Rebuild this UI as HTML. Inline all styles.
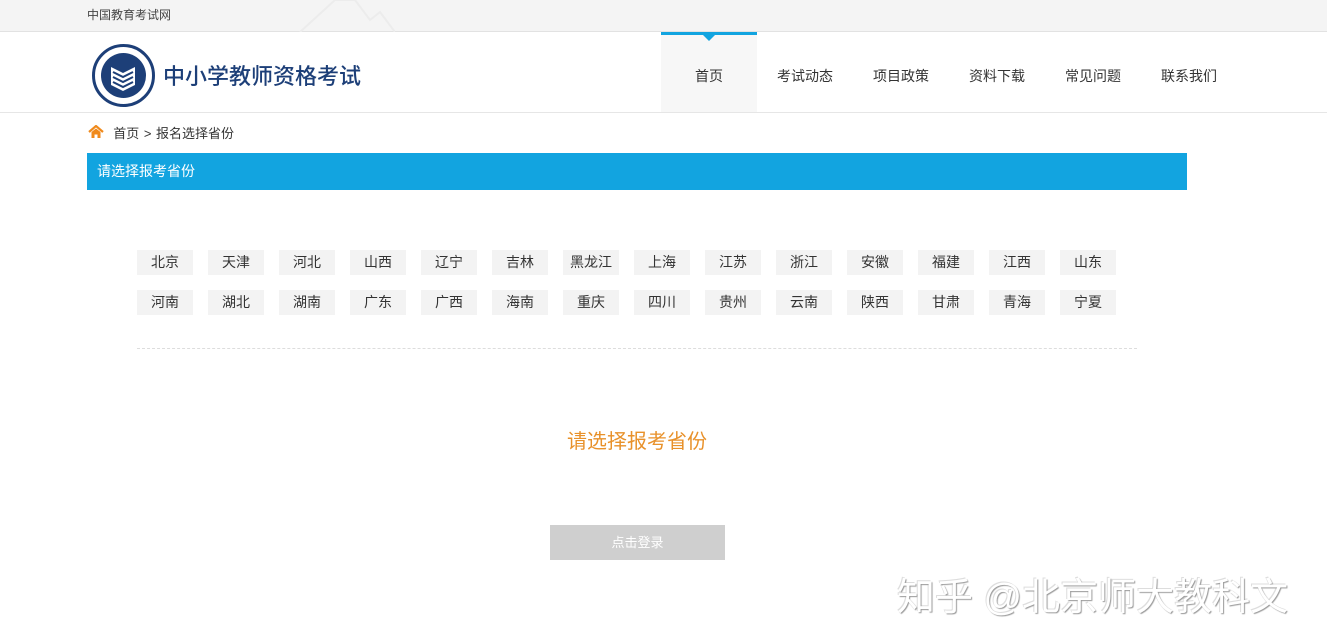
<!DOCTYPE html>
<html><head><meta charset="utf-8">
<style>
*{margin:0;padding:0;box-sizing:border-box}
body{width:1327px;height:643px;background:#fff;font-family:"Liberation Sans","Noto Sans CJK SC",sans-serif;position:relative;overflow:hidden;color:#333}
.top{position:absolute;left:0;top:0;width:1327px;height:32px;background:#f4f4f4;border-bottom:1px solid #e2e2e2}
.top span{position:absolute;left:87px;top:6px;font-size:12px;color:#444}
.hdr{position:absolute;left:0;top:32px;width:1327px;height:81px;border-bottom:1px solid #e6e6e6}
.logo{position:absolute;left:92px;top:12px;width:63px;height:63px;border-radius:50%;border:3px solid #1d3f78;background:#fff}
.logo .in{position:absolute;left:6px;top:6px;width:45px;height:45px;border-radius:50%;background:#1d3f78}
.title{position:absolute;left:163px;top:27px;font-size:22px;font-weight:500;color:#1d3f78}
.nav{position:absolute;left:661px;top:0;height:80px}
.nav div{position:absolute;top:0;width:96px;height:80px;text-align:center;line-height:88px;font-size:14px;color:#333}
.nav .act{background:#f7f7f7;border-top:3px solid #12a4e0;line-height:82px}
.nav .act:before{content:"";position:absolute;left:42px;top:0;border:6px solid transparent;border-top-color:#12a4e0}
.bc{position:absolute;left:88px;top:123px;font-size:13px;color:#333;word-spacing:1px}
.bar{position:absolute;left:87px;top:153px;width:1100px;height:37px;background:#12a4e0;color:#fff;font-size:14px;line-height:37px;padding-left:10px}
.p{position:absolute;width:56px;height:25px;background:#f3f3f3;font-size:14px;line-height:25px;text-align:center;color:#333}
.dash{position:absolute;left:137px;top:348px;width:1000px;border-top:1px dashed #ddd}
.msg{position:absolute;left:0;width:1274px;top:425px;text-align:center;font-size:20px;color:#e8912a}
.btn{position:absolute;left:550px;top:525px;width:175px;height:35px;background:#cfcfcf;color:#fff;font-size:13px;line-height:35px;text-align:center}
.wm{position:absolute;left:897px;top:566px;font-size:38px;color:#fff;text-shadow:1px 1px 1px #999,-1px -1px 0 #ddd}
</style></head><body>
<div class="top"><span>中国教育考试网</span>
<svg style="position:absolute;left:295px;top:0" width="100" height="32"><path d="M5 32 L40 0 M60 0 L75 20 L85 12 L100 32 M40 0 L60 0" stroke="#ececec" fill="none" stroke-width="2"/></svg></div>
<div class="hdr">
<div class="logo"><div class="in">
<svg width="45" height="45" viewBox="0 0 45 45"><path d="M10 14 L22 20 L34 14 L34 32 L22 38 L10 32Z" fill="#fff"/><path d="M12 19 L22 24 L32 19 M12 24 L22 29 L32 24 M12 29 L22 34 L32 29" stroke="#1d3f78" stroke-width="2" fill="none"/></svg></div></div>
<div class="title">中小学教师资格考试</div>
<div class="nav">
<div class="act" style="left:0">首页</div>
<div style="left:96px">考试动态</div>
<div style="left:192px">项目政策</div>
<div style="left:288px">资料下载</div>
<div style="left:384px">常见问题</div>
<div style="left:480px">联系我们</div>
</div></div>
<div class="bc"><svg width="16" height="14" viewBox="0 0 16 14" style="vertical-align:-1px"><path d="M1 7 L8 1 L15 7" stroke="#f08a1c" stroke-width="2.2" fill="none"/><path d="M3.5 7 V13 H6.5 V9.5 H9.5 V13 H12.5 V7 L8 3.5Z" fill="#f08a1c"/></svg>&nbsp; 首页 &gt; 报名选择省份</div>
<div class="bar">请选择报考省份</div>
<div class="p" style="left:137px;top:250px">北京</div><div class="p" style="left:208px;top:250px">天津</div><div class="p" style="left:279px;top:250px">河北</div><div class="p" style="left:350px;top:250px">山西</div><div class="p" style="left:421px;top:250px">辽宁</div><div class="p" style="left:492px;top:250px">吉林</div><div class="p" style="left:563px;top:250px">黑龙江</div><div class="p" style="left:634px;top:250px">上海</div><div class="p" style="left:705px;top:250px">江苏</div><div class="p" style="left:776px;top:250px">浙江</div><div class="p" style="left:847px;top:250px">安徽</div><div class="p" style="left:918px;top:250px">福建</div><div class="p" style="left:989px;top:250px">江西</div><div class="p" style="left:1060px;top:250px">山东</div>
<div class="p" style="left:137px;top:290px">河南</div><div class="p" style="left:208px;top:290px">湖北</div><div class="p" style="left:279px;top:290px">湖南</div><div class="p" style="left:350px;top:290px">广东</div><div class="p" style="left:421px;top:290px">广西</div><div class="p" style="left:492px;top:290px">海南</div><div class="p" style="left:563px;top:290px">重庆</div><div class="p" style="left:634px;top:290px">四川</div><div class="p" style="left:705px;top:290px">贵州</div><div class="p" style="left:776px;top:290px">云南</div><div class="p" style="left:847px;top:290px">陕西</div><div class="p" style="left:918px;top:290px">甘肃</div><div class="p" style="left:989px;top:290px">青海</div><div class="p" style="left:1060px;top:290px">宁夏</div>
<div class="dash"></div>
<div class="msg">请选择报考省份</div>
<div class="btn">点击登录</div>
<div class="wm">知乎 @北京师大教科文</div>
</body></html>
